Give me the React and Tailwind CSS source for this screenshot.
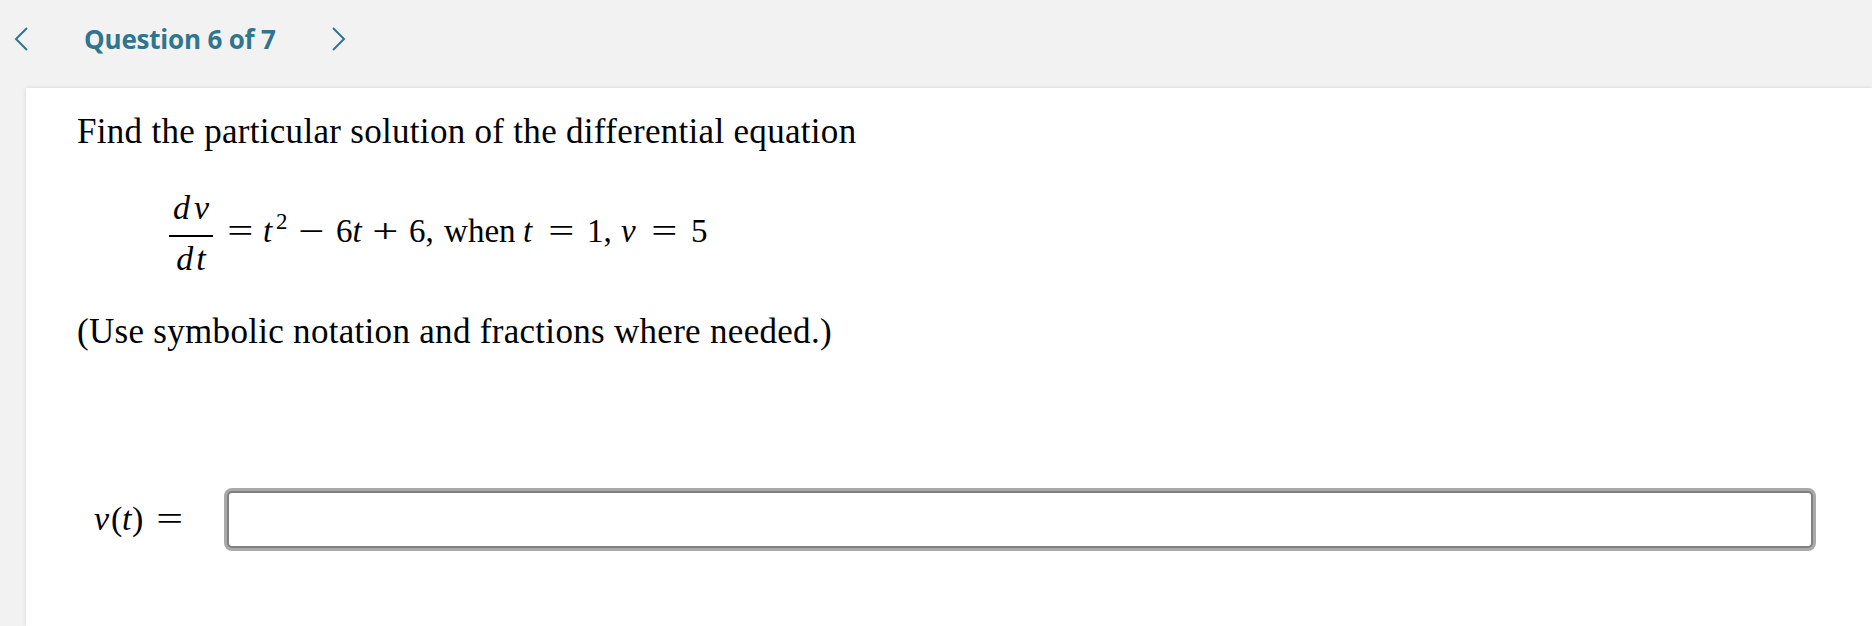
const serif = "font-['Liberation_Serif','Times_New_Roman',serif]";

function Chevron({ dir }) {
    return (
        <svg width="14" height="24" viewBox="0 0 14 24" fill="none" stroke="#2f758e" strokeWidth="2">
            {dir === 'left' ? <polyline points="13,1 2,12 13,23" /> : <polyline points="1,1 12,12 1,23" />}
        </svg>
    );
}

function Fraction({ top, bottom }) {
    return (
        <span className="inline-flex flex-col items-center">
            <span className="block text-[34px] italic leading-[32px] tracking-[4px] pl-[4px] mb-[11px]">{top}</span>
            <span className="block h-[1.5px] w-[44px] bg-black" />
            <span className="block text-[34px] italic leading-[32px] tracking-[3px] pl-[3px] mt-[6px]">{bottom}</span>
        </span>
    );
}

// wide relation / operator sign, centred in a fixed box
function Op({ children, className = '' }) {
    return (
        <span className={`inline-block w-[28px] text-center ${className}`}>
            <span className="inline-block scale-x-[1.4]">{children}</span>
        </span>
    );
}

export default function App() {
    return (
        <div className="flex h-[626px] w-full flex-col overflow-hidden bg-[#f2f2f2]">
            <header className="flex h-[78px] shrink-0 items-center mb-[10px]">
                <button className="ml-[14px] flex items-center">
                    <Chevron dir="left" />
                </button>
                <span className="ml-[56px] font-['Open_Sans',sans-serif] text-[26px] font-bold tracking-[-0.2px] text-[#2f758e]">
                    Question 6 of 7
                </span>
                <button className="ml-[56px] flex items-center">
                    <Chevron dir="right" />
                </button>
            </header>

            <main className={`flex-1 ml-[26px] bg-white shadow-[0_0_4px_rgba(0,0,0,0.12)] pl-[51px] pr-[56px] pt-[26px] text-black ${serif}`}>
                <p className="text-[35px] leading-[35px] tracking-[0.3px]">Find the particular solution of the differential equation</p>

                <div className="mt-[43px] ml-[92px] flex items-center">
                    <Fraction top="dv" bottom="dt" />
                    <span className="ml-[13px] inline-flex items-baseline whitespace-nowrap text-[33px] leading-[32px]">
                        <Op>=</Op>
                        <span className="ml-[9px] inline-block w-[10px] italic">t</span>
                        <span className="ml-[3px] inline-block w-[12px] relative -top-[13px] text-[23px]">2</span>
                        <Op className="ml-[9px]">−</Op>
                        <span className="ml-[11px] inline-block w-[26px]">6<span className="italic">t</span></span>
                        <Op className="ml-[9px]">+</Op>
                        <span className="ml-[10px] inline-block w-[25px]">6,</span>
                        <span className="ml-[10px] inline-block w-[72px]">when</span>
                        <span className="ml-[7px] inline-block w-[10px] italic">t</span>
                        <Op className="ml-[14px]">=</Op>
                        <span className="ml-[12px] inline-block w-[25px]">1,</span>
                        <span className="ml-[9px] inline-block w-[15px] italic">v</span>
                        <Op className="ml-[14px]">=</Op>
                        <span className="ml-[13px] inline-block w-[17px]">5</span>
                    </span>
                </div>

                <p className="mt-[39px] text-[35px] leading-[35px] tracking-[0.3px]">(Use symbolic notation and fractions where needed.)</p>

                <div className="mt-[142px] flex items-center">
                    <span className="ml-[17px] inline-flex w-[130px] shrink-0 items-baseline whitespace-nowrap text-[34px] leading-[32px]">
                        <span className="inline-block w-[16px] italic">v</span>
                        <span className="ml-[1px] inline-block w-[11px]">(</span>
                        <span className="inline-block w-[10px] italic">t</span>
                        <span className="inline-block w-[11px]">)</span>
                        <Op className="ml-[13px]">=</Op>
                    </span>
                    <input
                        type="text"
                        aria-label="v(t)"
                        className="h-[57px] flex-1 mx-[3px] rounded-[5px] border-2 border-[#7f7f7f] bg-white shadow-[0_0_0_3px_#a9a9a9] outline-none"
                    />
                </div>
            </main>
        </div>
    );
}
